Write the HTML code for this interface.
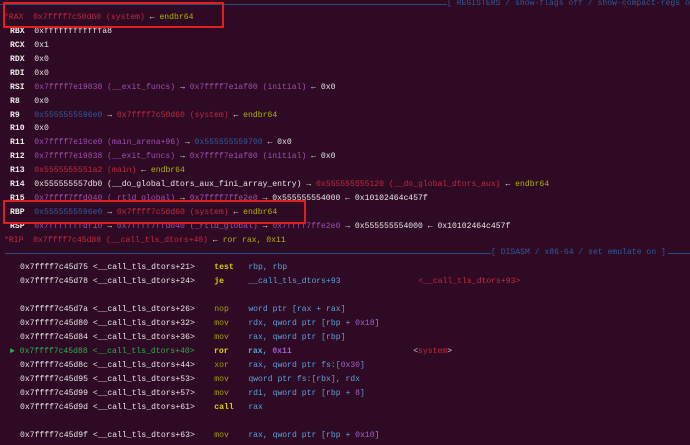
<!DOCTYPE html>
<html><head><meta charset="utf-8"><style>
html,body{margin:0;padding:0;background:#2f0a24;width:690px;height:445px;overflow:hidden}
body{position:relative;font-family:"Liberation Mono","DejaVu Sans Mono",monospace;font-size:8.1px;color:#e6e6e6}
.l{position:absolute;white-space:pre;line-height:12px;height:12px}
.w{color:#eeeeee;font-weight:bold}
.r{color:#c2283e}
.p{color:#9c4fae}
.b{color:#2f5b9c}
.y{color:#a8b400}
.Y{color:#d4d400;font-weight:bold}
.o{color:#9ca000}
.c{color:#5ba0d8}
.n{color:#9c5fd0}
.g{color:#2bb04f}
.sep{position:absolute;height:1px;background:#2a4a82}
.hd{color:#2e5a9a}
.box{position:absolute;border:2px solid #e0201c;box-sizing:border-box}
</style></head><body>
<div class="sep" style="left:0;top:4px;width:447px"></div>
<div class="l hd" style="left:447px;top:-2px">[ REGISTERS / show-flags off / show-compact-regs off ]</div>

<div class="l" style="left:4px;top:12px"><span class="r">*RAX</span>  <span class="r">0x7ffff7c50d60 (system)</span> ← <span class="y">endbr64</span></div>
<div class="l" style="left:10px;top:26px"><span class="w">RBX</span>  0xffffffffffffa8</div>
<div class="l" style="left:10px;top:40px"><span class="w">RCX</span>  0x1</div>
<div class="l" style="left:10px;top:54px"><span class="w">RDX</span>  0x0</div>
<div class="l" style="left:10px;top:68px"><span class="w">RDI</span>  0x0</div>
<div class="l" style="left:10px;top:82px"><span class="w">RSI</span>  <span class="p">0x7ffff7e19838 (__exit_funcs)</span> → <span class="p">0x7ffff7e1af00 (initial)</span> ← 0x0</div>
<div class="l" style="left:10px;top:96px"><span class="w">R8</span>   0x0</div>
<div class="l" style="left:10px;top:110px"><span class="w">R9</span>   <span class="b">0x5555555596e0</span> → <span class="r">0x7ffff7c50d60 (system)</span> ← <span class="y">endbr64</span></div>
<div class="l" style="left:10px;top:123px"><span class="w">R10</span>  0x0</div>
<div class="l" style="left:10px;top:137px"><span class="w">R11</span>  <span class="p">0x7ffff7e19ce0 (main_arena+96)</span> → <span class="b">0x555555559700</span> ← 0x0</div>
<div class="l" style="left:10px;top:151px"><span class="w">R12</span>  <span class="p">0x7ffff7e19838 (__exit_funcs)</span> → <span class="p">0x7ffff7e1af00 (initial)</span> ← 0x0</div>
<div class="l" style="left:10px;top:165px"><span class="w">R13</span>  <span class="r">0x5555555551a2 (main)</span> ← <span class="y">endbr64</span></div>
<div class="l" style="left:10px;top:179px"><span class="w">R14</span>  0x555555557db0 (__do_global_dtors_aux_fini_array_entry) → <span class="r">0x555555555120 (__do_global_dtors_aux)</span> ← <span class="y">endbr64</span></div>
<div class="l" style="left:10px;top:193px"><span class="w">R15</span>  <span class="p">0x7ffff7ffd040 (_rtld_global)</span> → <span class="p">0x7ffff7ffe2e0</span> → 0x555555554000 ← 0x10102464c457f</div>
<div class="l" style="left:10px;top:207px"><span class="w">RBP</span>  <span class="b">0x5555555596e0</span> → <span class="r">0x7ffff7c50d60 (system)</span> ← <span class="y">endbr64</span></div>
<div class="l" style="left:10px;top:221px"><span class="w">RSP</span>  <span class="p">0x7fffffffdf10</span> → <span class="p">0x7ffff7ffd040 (_rtld_global)</span> → <span class="p">0x7ffff7ffe2e0</span> → 0x555555554000 ← 0x10102464c457f</div>
<div class="l" style="left:4px;top:235px"><span class="r">*RIP</span>  <span class="r">0x7ffff7c45d88 (__call_tls_dtors+40)</span> ← <span class="y">ror rax, 0x11</span></div>

<div class="sep" style="left:5px;top:253px;width:486px"></div>
<div class="l hd" style="left:491px;top:247px">[ DISASM / x86-64 / set emulate on ]</div>
<div class="sep" style="left:668px;top:253px;width:22px"></div>

<div class="l" style="left:20px;top:262px">0x7ffff7c45d75 &lt;__call_tls_dtors+21&gt;    <span class="Y">test</span>   <span class="c">rbp, rbp</span></div>
<div class="l" style="left:20px;top:276px">0x7ffff7c45d78 &lt;__call_tls_dtors+24&gt;    <span class="Y">je</span>     <span class="c">__call_tls_dtors+93</span>                <span class="r">&lt;__call_tls_dtors+93&gt;</span></div>
<div class="l" style="left:20px;top:304px">0x7ffff7c45d7a &lt;__call_tls_dtors+26&gt;    <span class="o">nop</span>    <span class="c">word ptr [rax + rax]</span></div>
<div class="l" style="left:20px;top:318px">0x7ffff7c45d80 &lt;__call_tls_dtors+32&gt;    <span class="o">mov</span>    <span class="c">rdx, qword ptr [rbp + </span><span class="n">0x18</span><span class="c">]</span></div>
<div class="l" style="left:20px;top:332px">0x7ffff7c45d84 &lt;__call_tls_dtors+36&gt;    <span class="o">mov</span>    <span class="c">rax, qword ptr [rbp]</span></div>
<div class="l g" style="left:10px;top:346px">► 0x7ffff7c45d88 &lt;__call_tls_dtors+40&gt;    <span class="Y">ror</span>    <span class="c" style="font-weight:bold">rax,</span> <span class="n" style="font-weight:bold">0x11</span>                         <span style="color:#ccc">&lt;</span><span class="r">system</span><span style="color:#ccc">&gt;</span></div>
<div class="l" style="left:20px;top:360px">0x7ffff7c45d8c &lt;__call_tls_dtors+44&gt;    <span class="o">xor</span>    <span class="c">rax, qword ptr fs:[</span><span class="n">0x30</span><span class="c">]</span></div>
<div class="l" style="left:20px;top:374px">0x7ffff7c45d95 &lt;__call_tls_dtors+53&gt;    <span class="o">mov</span>    <span class="c">qword ptr fs:[rbx], rdx</span></div>
<div class="l" style="left:20px;top:388px">0x7ffff7c45d99 &lt;__call_tls_dtors+57&gt;    <span class="o">mov</span>    <span class="c">rdi, qword ptr [rbp + </span><span class="n">8</span><span class="c">]</span></div>
<div class="l" style="left:20px;top:402px">0x7ffff7c45d9d &lt;__call_tls_dtors+61&gt;    <span class="Y">call</span>   <span class="c">rax</span></div>
<div class="l" style="left:20px;top:430px">0x7ffff7c45d9f &lt;__call_tls_dtors+63&gt;    <span class="o">mov</span>    <span class="c">rax, qword ptr [rbp + </span><span class="n">0x10</span><span class="c">]</span></div>

<div class="box" style="left:3px;top:2px;width:221px;height:26px"></div>
<div class="box" style="left:3px;top:200px;width:303px;height:24px"></div>
</body></html>
